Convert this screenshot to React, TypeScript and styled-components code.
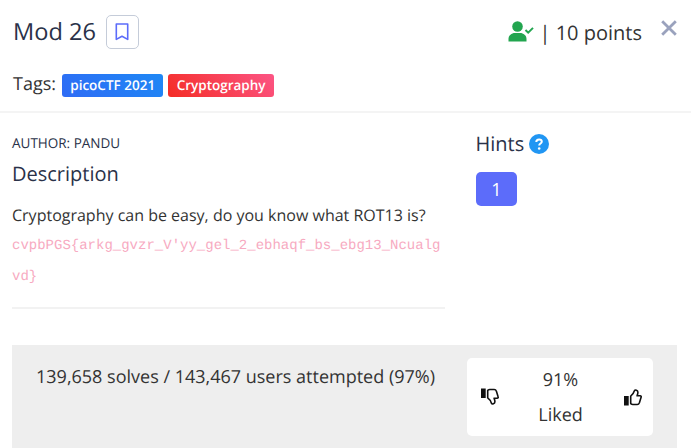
import * as React from "react";
import styled, { createGlobalStyle } from "styled-components";

const GlobalStyle = createGlobalStyle`
  html, body {
    margin: 0;
    padding: 0;
    background: #fff;
    font-family: "Open Sans", sans-serif;
    text-rendering: geometricPrecision;
    overflow: hidden;
  }
  * { box-sizing: border-box; }
`;

const SModal = styled.div`
  width: 691px;
  height: 448px;
  overflow: hidden;
  background: #fff;
`;

const SHeader = styled.div`
  height: 113px;
  padding: 13px 14px 0 13px;
  border-bottom: 2px solid #f4f4f4;
`;

const STitleRow = styled.div`
  display: flex;
  align-items: center;
  justify-content: space-between;
  height: 38px;
`;

const STitleGroup = styled.div`
  display: flex;
  align-items: center;
  gap: 10px;
`;

const STitle = styled.h1`
  margin: -2px 0 0;
  font-size: 23.6px;
  font-weight: 400;
  color: #2a3249;
`;

const SBookmark = styled.button`
  display: flex;
  align-items: center;
  justify-content: center;
  width: 33px;
  height: 34px;
  padding: 0;
  background: #fff;
  border: 1px solid #c5ccd9;
  border-radius: 5px;
`;

const SPoints = styled.div`
  display: flex;
  align-items: center;
  gap: 6px;
  font-size: 20px;
  color: #333;
`;

const SClose = styled.span`
  display: flex;
  margin-left: 13px;
  margin-top: -9px;
`;

const STagRow = styled.div`
  display: flex;
  align-items: center;
  gap: 5px;
  margin-top: 23px;
  font-size: 18px;
  color: #333;
`;

const STagLabel = styled.span`
  margin-top: -3px;
  margin-right: 1px;
`;

const STag = styled.span<{ $bg: string }>`
  display: block;
  height: 23px;
  line-height: 23px;
  padding: 0 8.25px;
  border-radius: 3px;
  font-size: 13.5px;
  font-weight: 600;
  color: #fff;
  background: ${({ $bg }) => $bg};
`;

const SBody = styled.div`
  display: flex;
  padding: 21px 14px 0 12px;
`;

const SMain = styled.div`
  width: 433px;
  height: 175px;
  border-bottom: 2px solid #f2f2f2;
`;

const SAuthor = styled.div`
  font-size: 13.5px;
  line-height: 18px;
  color: #2a3249;
  text-transform: uppercase;
`;

const SHeading = styled.h2`
  margin: 8px 0 0;
  font-size: 20px;
  line-height: 28px;
  font-weight: 400;
  color: #2a3249;
`;

const SText = styled.p`
  margin: 15px 0 0;
  font-size: 16px;
  line-height: 24px;
  color: #333;
`;

const SFlag = styled.code`
  display: block;
  margin-top: 4px;
  font-family: "Liberation Mono", monospace;
  font-size: 14px;
  line-height: 31px;
  color: #f7aac1;
  word-break: break-all;
`;

const SSide = styled.div`
  margin-left: 31px;
`;

const SHintsTitle = styled.div`
  display: flex;
  align-items: center;
  gap: 5px;
  margin: -4px 0 0 -0.5px;
  font-size: 20px;
  line-height: 28px;
  color: #2a3249;
`;

const SHintButton = styled.button`
  display: block;
  width: 41px;
  height: 34px;
  margin-top: 14px;
  padding: 0;
  border: 0;
  border-radius: 5px;
  background: #5c6cfa;
  color: #fff;
  font-family: inherit;
  font-size: 18px;
`;

const SFooter = styled.div`
  display: flex;
  margin: 36px 14px 0 12px;
  height: 103px;
  padding: 13px 24px 0 24px;
  background: #eeeeee;
`;

const SSolves = styled.div`
  width: 431px;
  font-size: 18px;
  line-height: 38px;
  color: #333;
`;

const SLikes = styled.div`
  display: flex;
  align-items: center;
  justify-content: space-between;
  width: 186px;
  height: 78px;
  padding: 0 11px 0 12px;
  background: #fff;
  border-radius: 5px;
`;

const SLikeText = styled.div`
  padding-top: 2px;
  font-size: 18px;
  line-height: 35px;
  text-align: center;
  color: #333;
`;

const BookmarkIcon = () => (
  <svg width="14" height="18" viewBox="0 0 14 18" fill="none" stroke="#5c6cfa" strokeWidth="1.6">
    <path d="M1.3 1h11.4v15.4L7 13.2l-5.7 3.2z" strokeLinejoin="round" />
  </svg>
);

const UserCheckIcon = () => (
  <svg width="26" height="22" viewBox="0 0 26 22" fill="#22a54f">
    <circle cx="9.5" cy="5.500" r="5.300" />
    <path d="M0.500 20.500v-2.500C0.500 14.500 3.500 12 7 12h5c3.500 0 6.500 2.500 6.500 6V20.500z" />
    <path d="M17.500 9l2.700 2.700 4.800-4.800" fill="none" stroke="#22a54f" strokeWidth="2" />
  </svg>
);

const CloseIcon = () => (
  <svg width="16" height="16" viewBox="0 0 16 16" stroke="#9aa2bd" strokeWidth="2.800">
    <path d="M1.200 1.200l13.600 13.600M14.800 1.200L1.200 14.800" />
  </svg>
);

const HelpIcon = () => (
  <svg width="20" height="20" viewBox="0 0 20 20">
    <circle cx="10" cy="10" r="10" fill="#2196f3" />
    <path d="M7.300 8c0-1.600 1.200-2.600 2.800-2.600s2.700 1 2.700 2.300c0 1.800-2.600 1.800-2.600 3.700" fill="none" stroke="#fff" strokeWidth="2" />
    <circle cx="10.200" cy="14.500" r="1.300" fill="#fff" />
  </svg>
);

const ThumbPaths = () => (
  <>
    <rect x="2" y="9" width="4.700" height="9.500" fill="#111" stroke="none" />
    <path d="M8.700 9.200c1.500-1 3-3.200 3.700-5.400.6-1.300 3.600-.8 3.500 1.500 0 1.300-.4 2.300-.8 3.500h3c.9 0 1.300.7 1 1.500l-1.700 5.500c-.4 1.100-1 1.700-2.200 1.700h-4.400c-1 0-1.500-.4-2.100-.9z" />
  </>
);

const ThumbUp = () => (
  <svg width="20" height="20" viewBox="0 0 20 20" fill="none" stroke="#111" strokeWidth="1.600" strokeLinejoin="round">
    <ThumbPaths />
  </svg>
);

const SThumbDown = styled.svg`
  transform: scaleY(-1);
`;

const ThumbDown = () => (
  <SThumbDown width="20" height="20" viewBox="0 0 20 20" fill="none" stroke="#111" strokeWidth="1.600" strokeLinejoin="round">
    <ThumbPaths />
  </SThumbDown>
);

export default function App() {
  return (
    <SModal>
      <GlobalStyle />
      <SHeader>
        <STitleRow>
          <STitleGroup>
            <STitle>Mod 26</STitle>
            <SBookmark><BookmarkIcon /></SBookmark>
          </STitleGroup>
          <SPoints>
            <UserCheckIcon />
            <span>| 10 points</span>
            <SClose><CloseIcon /></SClose>
          </SPoints>
        </STitleRow>
        <STagRow>
          <STagLabel>Tags:</STagLabel>
          <STag $bg="linear-gradient(45deg, #2f6bf5, #1e88f5)">picoCTF 2021</STag>
          <STag $bg="linear-gradient(45deg, #f42c24, #fc5585)">Cryptography</STag>
        </STagRow>
      </SHeader>
      <SBody>
        <SMain>
          <SAuthor>Author: Pandu</SAuthor>
          <SHeading>Description</SHeading>
          <SText>Cryptography can be easy, do you know what ROT13 is?</SText>
          <SFlag>{"cvpbPGS{arkg_gvzr_V'yy_gel_2_ebhaqf_bs_ebg13_Ncualgvd}"}</SFlag>
        </SMain>
        <SSide>
          <SHintsTitle>Hints <HelpIcon /></SHintsTitle>
          <SHintButton>1</SHintButton>
        </SSide>
      </SBody>
      <SFooter>
        <SSolves>139,658 solves / 143,467 users attempted (97%)</SSolves>
        <SLikes>
          <ThumbDown />
          <SLikeText>91%<br />Liked</SLikeText>
          <ThumbUp />
        </SLikes>
      </SFooter>
    </SModal>
  );
}
